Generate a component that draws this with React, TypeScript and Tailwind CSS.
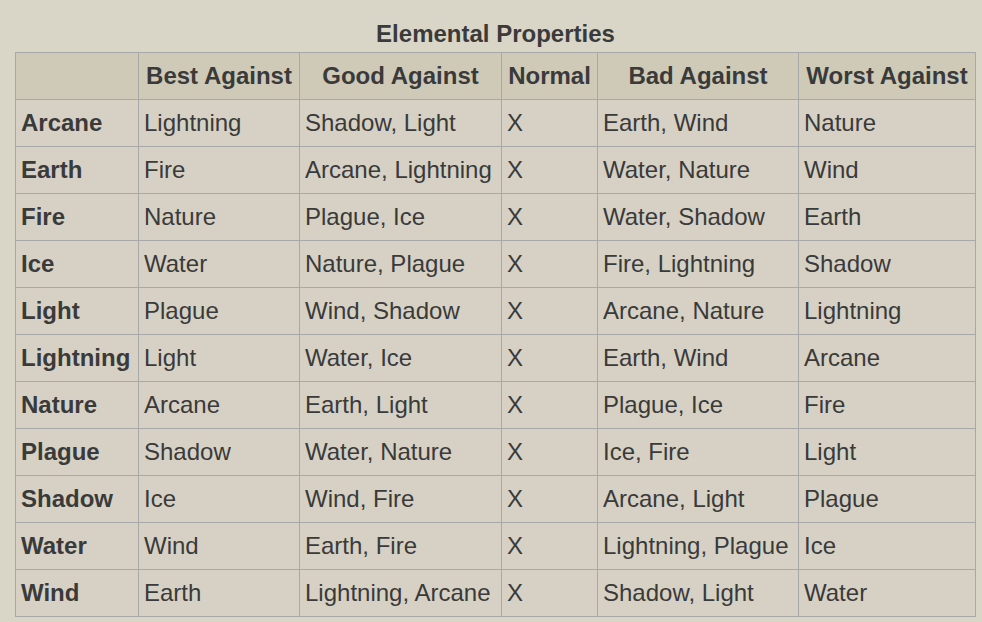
import React from 'react';

type Row = [string, string, string, string, string, string];

const rows: Row[] = [
  ['Arcane', 'Lightning', 'Shadow, Light', 'X', 'Earth, Wind', 'Nature'],
  ['Earth', 'Fire', 'Arcane, Lightning', 'X', 'Water, Nature', 'Wind'],
  ['Fire', 'Nature', 'Plague, Ice', 'X', 'Water, Shadow', 'Earth'],
  ['Ice', 'Water', 'Nature, Plague', 'X', 'Fire, Lightning', 'Shadow'],
  ['Light', 'Plague', 'Wind, Shadow', 'X', 'Arcane, Nature', 'Lightning'],
  ['Lightning', 'Light', 'Water, Ice', 'X', 'Earth, Wind', 'Arcane'],
  ['Nature', 'Arcane', 'Earth, Light', 'X', 'Plague, Ice', 'Fire'],
  ['Plague', 'Shadow', 'Water, Nature', 'X', 'Ice, Fire', 'Light'],
  ['Shadow', 'Ice', 'Wind, Fire', 'X', 'Arcane, Light', 'Plague'],
  ['Water', 'Wind', 'Earth, Fire', 'X', 'Lightning, Plague', 'Ice'],
  ['Wind', 'Earth', 'Lightning, Arcane', 'X', 'Shadow, Light', 'Water'],
];

const headers = ['', 'Best Against', 'Good Against', 'Normal', 'Bad Against', 'Worst Against'];
const widths = ['w-[123px]', 'w-[161px]', 'w-[202px]', 'w-[96px]', 'w-[201px]', 'w-[177px]'];

export default function App() {
  return (
    <div className="min-h-[622px] w-full bg-[#d9d6c8] pt-[16px] pl-[15px] font-['Liberation_Sans',Arial,sans-serif] text-[24px] text-[#3a3a3a]">
      <table className="table-fixed border-collapse w-[961px]">
        <caption className="h-[36px] font-bold leading-[36px]">Elemental Properties</caption>
        <colgroup>
          {widths.map((w, i) => (
            <col key={i} className={w} />
          ))}
        </colgroup>
        <thead>
          <tr>
            {headers.map((h, i) => (
              <th
                key={i}
                className="h-[47px] border border-[#a8a8a8] bg-[#cfcab8] px-[5px] text-center font-bold whitespace-nowrap"
              >
                {h}
              </th>
            ))}
          </tr>
        </thead>
        <tbody>
          {rows.map((r) => (
            <tr key={r[0]}>
              {r.map((c, i) => (
                <td
                  key={i}
                  className={`h-[47px] border border-[#a8a8a8] bg-[#d6d1c4] px-[5px] text-left whitespace-nowrap ${
                    i === 0 ? 'font-bold' : ''
                  }`}
                >
                  {c}
                </td>
              ))}
            </tr>
          ))}
        </tbody>
      </table>
    </div>
  );
}
